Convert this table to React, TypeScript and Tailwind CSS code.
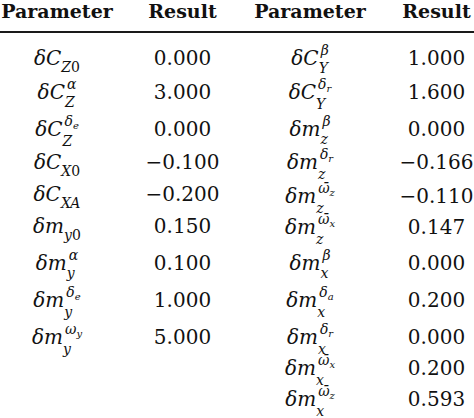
import React from "react";

type P = { base: string; sup?: React.ReactNode; sub: string; extra?: string };

function Script({ s }: { s: string }) {
  return (
    <>
      {s.split("").map((ch, i) =>
        /[0-9]/.test(ch) ? (
          <span key={i} className="not-italic">{ch}</span>
        ) : (
          <span key={i} className="italic">{ch}</span>
        )
      )}
    </>
  );
}

function SupSub({ g, s }: { g: string; s?: string }) {
  return (
    <span className="italic whitespace-nowrap">
      {g}
      {s ? <span className="relative top-[3px] text-[10px]">{s}</span> : null}
    </span>
  );
}

function Param({ base, sup, sub }: P) {
  return (
    <span className="whitespace-nowrap">
      <span className="italic">δ{base}</span>
      {sup ? (
        <span className="inline-flex flex-col items-start align-top text-[14px]">
          <span className="relative -top-[3px] leading-[10px] pl-[2px]">{sup}</span>
          <span className="relative top-[5px] leading-[10px]">
            <Script s={sub} />
          </span>
        </span>
      ) : (
        <span className="relative top-[7px] text-[14px] leading-none">
          <Script s={sub} />
        </span>
      )}
    </span>
  );
}

type Row = {
  h: string;
  l?: { p: P; v: string };
  r: { p: P; v: string; pad?: string };
};

const rows: Row[] = [
  { h: "h-[34px]", l: { p: { base: "C", sub: "Z0" }, v: "0.000" }, r: { p: { base: "C", sup: <SupSub g="β" />, sub: "Y" }, v: "1.000" } },
  { h: "h-[37px]", l: { p: { base: "C", sup: <SupSub g="α" />, sub: "Z" }, v: "3.000" }, r: { p: { base: "C", sup: <SupSub g="δ" s="r" />, sub: "Y" }, v: "1.600" } },
  { h: "h-[33px]", l: { p: { base: "C", sup: <SupSub g="δ" s="e" />, sub: "Z" }, v: "0.000" }, r: { p: { base: "m", sup: <SupSub g="β" />, sub: "z" }, v: "0.000" } },
  { h: "h-[32px]", l: { p: { base: "C", sub: "X0" }, v: "−0.100" }, r: { p: { base: "m", sup: <SupSub g="δ" s="r" />, sub: "z" }, v: "−0.166" } },
  { h: "h-[32px]", l: { p: { base: "C", sub: "XA" }, v: "−0.200" }, r: { p: { base: "m", sup: <SupSub g="ω̄" s="z" />, sub: "z" }, v: "−0.110", pad: "pt-[2px]" } },
  { h: "h-[37px]", l: { p: { base: "m", sub: "y0" }, v: "0.150" }, r: { p: { base: "m", sup: <SupSub g="ω̄" s="x" />, sub: "z" }, v: "0.147", pad: "pt-[1px]" } },
  { h: "h-[37px]", l: { p: { base: "m", sup: <SupSub g="α" />, sub: "y" }, v: "0.100" }, r: { p: { base: "m", sup: <SupSub g="β" />, sub: "x" }, v: "0.000" } },
  { h: "h-[37px]", l: { p: { base: "m", sup: <SupSub g="δ" s="e" />, sub: "y" }, v: "1.000" }, r: { p: { base: "m", sup: <SupSub g="δ" s="a" />, sub: "x" }, v: "0.200" } },
  { h: "h-[31px]", l: { p: { base: "m", sup: <SupSub g="ω" s="y" />, sub: "y" }, v: "5.000" }, r: { p: { base: "m", sup: <SupSub g="δ" s="r" />, sub: "x" }, v: "0.000" } },
  { h: "h-[31px]", r: { p: { base: "m", sup: <SupSub g="ω̄" s="x" />, sub: "x" }, v: "0.200" } },
  { h: "h-[31px]", r: { p: { base: "m", sup: <SupSub g="ω̄" s="z" />, sub: "x" }, v: "0.593" } },
];

const cols = "grid grid-cols-[114px_137px_118px_135px] w-[504px]";

export default function App() {
  return (
    <div className="w-[474px] h-[418px] overflow-hidden bg-white text-[#111] font-['DejaVu_Serif',serif]">
      <div className={`${cols} h-[31px] pt-[1px] text-[19px] leading-[20px] font-bold`}>
        <div className="text-center">Parameter</div>
        <div className="text-center">Result</div>
        <div className="text-center">Parameter</div>
        <div className="text-center">Result</div>
      </div>
      <div className="h-[2px] w-full bg-[#1a1a1a]" />
      <div className="pt-[15px] text-[20px] leading-[20px]">
        {rows.map((row, i) => (
          <div key={i} className={`${cols} ${row.h}`}>
            <div className="text-center">{row.l ? <Param {...row.l.p} /> : null}</div>
            <div className="text-center">{row.l ? row.l.v : null}</div>
            <div className={`text-center ${row.r.pad ?? ""}`}>
              <Param {...row.r.p} />
            </div>
            <div className={`text-center ${row.r.pad ?? ""}`}>{row.r.v}</div>
          </div>
        ))}
      </div>
    </div>
  );
}
